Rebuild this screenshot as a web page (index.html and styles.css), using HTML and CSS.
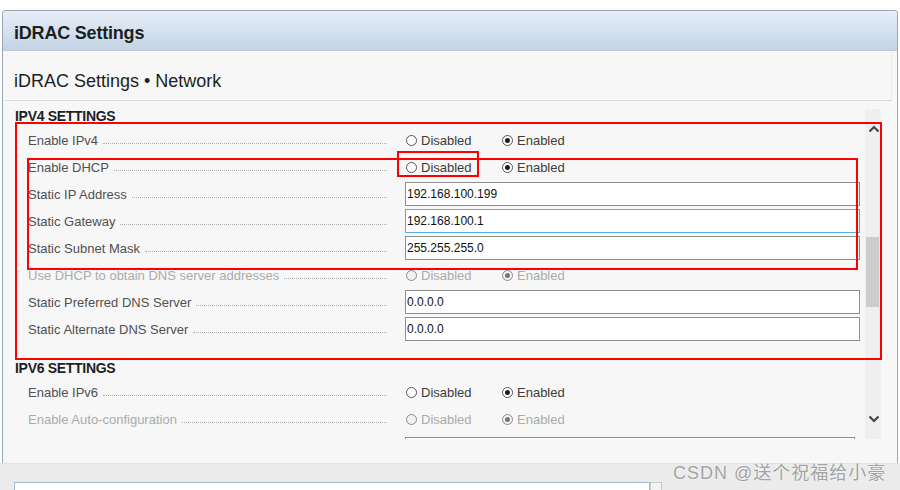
FILE: index.html
```html
<!DOCTYPE html>
<html lang="en">
<head>
<meta charset="utf-8">
<title>iDRAC Settings</title>
<link rel="stylesheet" href="styles.css">
</head>
<body>
<div class="window">
  <div class="titlebar"><h1 class="title">iDRAC Settings</h1></div>
  <div class="subhead">iDRAC Settings • Network</div>
  <div class="scrollwrap">
    <div class="content">
      <h2 class="section ipv4">IPV4 SETTINGS</h2>

      <div class="row">
        <div class="lbl"><span>Enable IPv4</span><i class="leader"></i></div>
        <div class="ctl">
          <span class="opt"><span class="dot"></span>Disabled</span>
          <span class="opt"><span class="dot on"></span>Enabled</span>
        </div>
      </div>
      <div class="row">
        <div class="lbl"><span>Enable DHCP</span><i class="leader"></i></div>
        <div class="ctl">
          <span class="opt"><span class="dot"></span>Disabled</span>
          <span class="opt"><span class="dot on"></span>Enabled</span>
        </div>
      </div>
      <div class="row">
        <div class="lbl"><span>Static IP Address</span><i class="leader"></i></div>
        <div class="ctl"><div class="field">192.168.100.199</div></div>
      </div>
      <div class="row">
        <div class="lbl"><span>Static Gateway</span><i class="leader"></i></div>
        <div class="ctl"><div class="field focus">192.168.100.1</div></div>
      </div>
      <div class="row">
        <div class="lbl"><span>Static Subnet Mask</span><i class="leader"></i></div>
        <div class="ctl"><div class="field">255.255.255.0</div></div>
      </div>
      <div class="row disabled">
        <div class="lbl"><span>Use DHCP to obtain DNS server addresses</span><i class="leader"></i></div>
        <div class="ctl">
          <span class="opt"><span class="dot"></span>Disabled</span>
          <span class="opt"><span class="dot on"></span>Enabled</span>
        </div>
      </div>
      <div class="row">
        <div class="lbl"><span>Static Preferred DNS Server</span><i class="leader"></i></div>
        <div class="ctl"><div class="field">0.0.0.0</div></div>
      </div>
      <div class="row">
        <div class="lbl"><span>Static Alternate DNS Server</span><i class="leader"></i></div>
        <div class="ctl"><div class="field">0.0.0.0</div></div>
      </div>

      <h2 class="section ipv6">IPV6 SETTINGS</h2>

      <div class="row">
        <div class="lbl"><span>Enable IPv6</span><i class="leader"></i></div>
        <div class="ctl">
          <span class="opt"><span class="dot"></span>Disabled</span>
          <span class="opt"><span class="dot on"></span>Enabled</span>
        </div>
      </div>
      <div class="row disabled">
        <div class="lbl"><span>Enable Auto-configuration</span><i class="leader"></i></div>
        <div class="ctl">
          <span class="opt"><span class="dot"></span>Disabled</span>
          <span class="opt"><span class="dot on"></span>Enabled</span>
        </div>
      </div>
      <div class="row-partial"><div class="field short"></div></div>
    </div>
    <div class="scrollbar">
      <div class="arrow">
        <svg width="12" height="10" viewBox="0 0 12 10"><polyline points="1.5,7.5 6,3 10.5,7.5" fill="none" stroke="#444" stroke-width="2.2"/></svg>
      </div>
      <div class="track"><div class="thumb"></div></div>
      <div class="arrow">
        <svg width="12" height="10" viewBox="0 0 12 10"><polyline points="1.5,2.5 6,7 10.5,2.5" fill="none" stroke="#444" stroke-width="2.2"/></svg>
      </div>
    </div>
  </div>
</div>
<div class="footer">
  <div class="footbox"></div>
  <div class="footbtn"></div>
</div>

<div class="annot annot-outer"></div>
<div class="annot annot-inner"></div>
<div class="annot annot-small"></div>
<div class="watermark">CSDN @送个祝福给小豪</div>
</body>
</html>
```

FILE: styles.css
```css
html, body {
  margin: 0;
  padding: 0;
}
body {
  width: 900px;
  height: 490px;
  overflow: hidden;
  background: #ffffff;
  font-family: "Liberation Sans", Arial, sans-serif;
  color: #4a4a4a;
  position: relative;
}
.window {
  box-sizing: border-box;
  width: 896px;
  margin: 10px 0 0 2px;
  border: 1px solid #98a6b6;
  border-bottom: none;
  border-radius: 4px 4px 0 0;
  background: #f7f7f7;
  padding-bottom: 24px;
}
.titlebar {
  box-sizing: border-box;
  height: 40px;
  padding: 5px 0 0 11px;
  display: flex;
  align-items: center;
  background: linear-gradient(#e6eef8, #d3e0ee 55%, #c3d4e6);
  border-bottom: 1px solid #c3ccd6;
  border-radius: 3px 3px 0 0;
}
.title {
  margin: 0;
  font-size: 18px;
  font-weight: bold;
  color: #1e1e1e;
  letter-spacing: -0.2px;
}
.subhead {
  margin: 0 5px 0 2px;
  padding: 20px 0 9px 9px;
  line-height: 20px;
  font-size: 18px;
  color: #1e1e1e;
  border-bottom: 1px solid #dadada;
  border-right: 1px solid #ececec;
}
.scrollwrap {
  display: flex;
  margin-top: 8px;
  height: 330px;
}
.content {
  flex: 1;
  overflow: hidden;
}
.section {
  margin: 0;
  padding-left: 12px;
  font-size: 14px;
  line-height: 18px;
  font-weight: bold;
  color: #1f1f1f;
  letter-spacing: -0.3px;
}
.ipv4 {
  margin-top: -2px;
  margin-bottom: 1.5px;
}
.ipv6 {
  margin-top: 16.5px;
  margin-bottom: 1.5px;
}
.row {
  display: flex;
  align-items: center;
  height: 27px;
  font-size: 13px;
}
.lbl {
  box-sizing: border-box;
  width: 384px;
  padding-left: 25px;
  display: flex;
  align-items: center;
  white-space: nowrap;
  color: #505050;
}
.leader {
  flex: 1;
  height: 0;
  margin: 6px 0 0 5px;
  border-top: 1px dotted #b0b0b0;
}
.ctl {
  margin-left: 18px;
  display: flex;
  align-items: center;
  color: #3c3c3c;
}
.opt {
  display: inline-flex;
  align-items: center;
  width: 96px;
}
.dot {
  box-sizing: border-box;
  width: 11px;
  height: 11px;
  margin: 1px 4px 0 1px;
  border: 1px solid #555;
  border-radius: 50%;
  background: #fff;
  display: inline-flex;
  align-items: center;
  justify-content: center;
}
.dot.on::after {
  content: "";
  width: 5px;
  height: 5px;
  border-radius: 50%;
  background: #1c1c1c;
}
.disabled .lbl,
.disabled .ctl {
  color: #ababab;
}
.disabled .dot {
  border-color: #8a8a8a;
  background: #f2f2f2;
}
.disabled .dot.on::after {
  background: #777;
}
.field {
  box-sizing: border-box;
  width: 455px;
  height: 24px;
  border: 1px solid #8e8e8e;
  background: #fff;
  font-size: 12px;
  line-height: 22px;
  padding: 0 1px;
  color: #111;
}
.field.focus {
  border-color: #52ace4;
}
.row-partial {
  padding: 4px 0 0 402px;
}
.field.short {
  width: 450px;
  border-bottom: none;
}
.scrollbar {
  width: 16px;
  margin-right: 16px;
  background: #efefef;
  display: flex;
  flex-direction: column;
}
.arrow {
  height: 40px;
  display: flex;
  align-items: center;
  justify-content: center;
  padding-left: 1px;
}
.track {
  flex: 1;
  padding-top: 88px;
}
.thumb {
  width: 13px;
  height: 70px;
  margin-left: 1px;
  background: #cdcdcd;
}
.footer {
  height: 27px;
  background: #ebebeb;
  display: flex;
  align-items: flex-start;
  padding-left: 14px;
  border-top: 1px solid #e2e2e2;
}
.footbox {
  box-sizing: border-box;
  width: 636px;
  height: 20px;
  margin-top: 18px;
  background: #fff;
  border: 1px solid #9fbcd6;
}
.footbtn {
  box-sizing: border-box;
  width: 12px;
  height: 20px;
  margin-top: 18px;
  background: #f4f4f4;
  border: 1px solid #c8c8c8;
}
.annot {
  position: absolute;
  box-sizing: border-box;
  border: 2px solid #ff0000;
}
.annot-outer {
  left: 15px;
  top: 122px;
  width: 867px;
  height: 238px;
}
.annot-inner {
  left: 27px;
  top: 158px;
  width: 831px;
  height: 112px;
}
.annot-small {
  left: 397px;
  top: 151px;
  width: 82px;
  height: 26px;
}
.watermark {
  position: absolute;
  left: 673px;
  top: 458px;
  font-family: "Liberation Sans", "Noto Sans CJK SC", sans-serif;
  font-size: 18px;
  letter-spacing: 1px;
  color: #a3a3a3;
  text-shadow: 0 0 2px #ffffff;
  white-space: nowrap;
}
```
